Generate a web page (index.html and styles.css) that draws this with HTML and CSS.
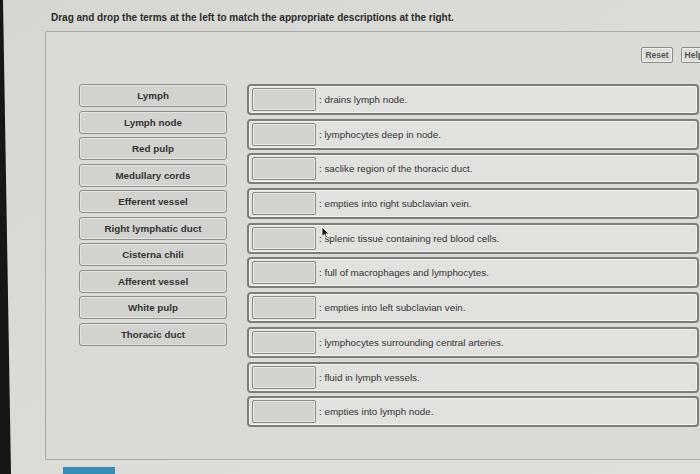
FILE: index.html
```html
<!DOCTYPE html>
<html lang="en">
<head>
    <meta charset="UTF-8">
    <meta name="viewport" content="width=device-width, initial-scale=1.0">
    <title>Lymphatic System - Matching</title>
    <link rel="stylesheet" href="styles.css">
</head>
<body>
    <div class="bezel"></div>
    <div class="page">
        <p class="prompt">Drag and drop the terms at the left to match the appropriate descriptions at the right.</p>

        <div class="panel">
            <div class="toolbar">
                <button class="tool-btn">Reset</button>
                <button class="tool-btn">Help</button>
            </div>

            <div class="board">
                <div class="terms">
                    <div class="term">Lymph</div>
                    <div class="term">Lymph node</div>
                    <div class="term">Red pulp</div>
                    <div class="term">Medullary cords</div>
                    <div class="term">Efferent vessel</div>
                    <div class="term">Right lymphatic duct</div>
                    <div class="term">Cisterna chili</div>
                    <div class="term">Afferent vessel</div>
                    <div class="term">White pulp</div>
                    <div class="term">Thoracic duct</div>
                </div>

                <div class="targets">
                    <div class="target"><span class="drop"></span><span class="desc">: drains lymph node.</span></div>
                    <div class="target"><span class="drop"></span><span class="desc">: lymphocytes deep in node.</span></div>
                    <div class="target"><span class="drop"></span><span class="desc">: saclike region of the thoracic duct.</span></div>
                    <div class="target"><span class="drop"></span><span class="desc">: empties into right subclavian vein.</span></div>
                    <div class="target">
                        <span class="drop"></span><span class="desc">: splenic tissue containing red blood cells.</span>
                        <!-- mouse pointer caught in the screenshot -->
                        <svg class="pointer" width="9" height="13" viewBox="0 0 9 13">
                            <path d="M1 1 L1 10.5 L3.3 8.4 L5 12 L6.4 11.3 L4.8 7.9 L8 7.9 Z" fill="#111" stroke="#fff" stroke-width="0.8"/>
                        </svg>
                    </div>
                    <div class="target"><span class="drop"></span><span class="desc">: full of macrophages and lymphocytes.</span></div>
                    <div class="target"><span class="drop"></span><span class="desc">: empties into left subclavian vein.</span></div>
                    <div class="target"><span class="drop"></span><span class="desc">: lymphocytes surrounding central arteries.</span></div>
                    <div class="target"><span class="drop"></span><span class="desc">: fluid in lymph vessels.</span></div>
                    <div class="target"><span class="drop"></span><span class="desc">: empties into lymph node.</span></div>
                </div>
            </div>
        </div>

        <div class="footer">
            <span class="submit-tab"></span>
        </div>
    </div>
</body>
</html>
```

FILE: styles.css
```css
* {
    box-sizing: border-box;
}

body {
    margin: 0;
    width: 700px;
    height: 474px;
    overflow: hidden;
    font-family: "Liberation Sans", Arial, sans-serif;
    background: linear-gradient(to bottom right, #d6d6d3, #dcdcd9 60%, #dfdfdc);
    color: #2e2e2e;
}

.bezel {
    position: absolute;
    left: 0;
    top: 0;
    width: 11px;
    height: 474px;
    background: #161616;
    clip-path: polygon(0 0, 3px 0, 11px 100%, 0 100%);
}

.page {
    padding: 12px 0 0 51px;
}

.prompt {
    margin: 0;
    font-size: 10px;
    font-weight: bold;
    line-height: 11px;
    color: #2b2b2b;
}

.panel {
    margin: 8px 0 0 -6px;
    width: 675px;
    height: 429px;
    padding: 15px 12px 0 33px;
    border: 1px solid #a9a9a6;
    border-radius: 2px;
    background: #dadad7;
}

.toolbar {
    display: flex;
    justify-content: flex-end;
    gap: 8px;
    height: 16px;
}

.tool-btn {
    height: 16px;
    padding: 0 3px;
    font-family: "Liberation Sans", Arial, sans-serif;
    font-size: 8.5px;
    font-weight: bold;
    color: #555;
    background: #dededb;
    border: 1px solid #8c8c89;
    border-radius: 2px;
    box-shadow: inset 0 0 0 1px #efefec;
}

.board {
    display: grid;
    grid-template-columns: 148px 452px;
    column-gap: 20px;
    margin-top: 21px;
}

.terms {
    display: flex;
    flex-direction: column;
    gap: 3.5px;
}

.term {
    height: 23px;
    line-height: 21px;
    text-align: center;
    font-size: 9.8px;
    font-weight: bold;
    color: #333;
    background: #d2d2cf;
    border: 1px solid #8e8e8b;
    border-radius: 3px;
    box-shadow: inset 0 0 0 1px #e4e4e1;
}

.targets {
    display: flex;
    flex-direction: column;
    gap: 3.7px;
}

.target {
    position: relative;
    display: flex;
    align-items: center;
    height: 31px;
    padding: 0 3px;
    background: #e1e1de;
    border: 2px solid #7d7d7a;
    border-radius: 4px;
    box-shadow: inset 0 0 0 1px #f3f3f0;
}

.drop {
    width: 64px;
    height: 23px;
    background: #d2d2cf;
    border: 1px solid #8a8a87;
    border-radius: 2px;
    box-shadow: inset 0 0 0 1px #e8e8e5;
}

.desc {
    margin-left: 3px;
    font-size: 9.8px;
    color: #333;
}

.pointer {
    position: absolute;
    left: 72px;
    top: 1px;
}

.footer {
    margin: 7px 0 0 12px;
}

.submit-tab {
    display: block;
    width: 52px;
    height: 8px;
    background: #3a8db2;
}
```
